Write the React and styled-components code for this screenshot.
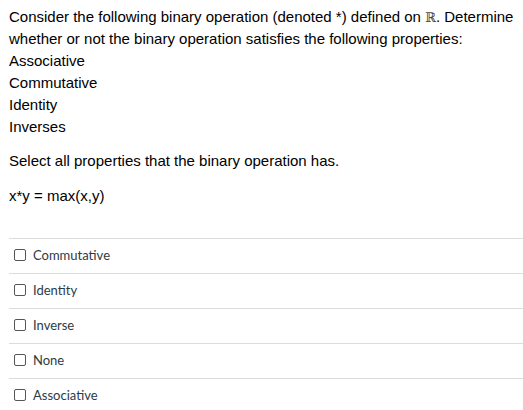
import React from 'react';
import styled, { createGlobalStyle } from 'styled-components';

const GlobalStyle = createGlobalStyle`
  body {
    margin: 0;
    background: #fff;
  }
`;

const Wrapper = styled.div`
  padding: 6px 0 0 9px;
  width: 514px;
`;

const Question = styled.div`
  font-family: "Liberation Sans", Arial, sans-serif;
  font-size: 15px;
  line-height: 22px;
  color: #000;
`;

const Para = styled.p`
  margin: 0 0 ${(p) => p.gap || 0}px;
`;

const Reals = styled.span`
  font-family: "DejaVu Serif", serif;
  font-size: 13px;
  line-height: 1;
  color: #444;
`;

const Answers = styled.div`
  margin-top: 31px;
  display: flex;
  flex-direction: column;
`;

const Option = styled.label`
  display: flex;
  align-items: center;
  gap: 7px;
  box-sizing: border-box;
  height: 35px;
  padding: 0 0 3px 5px;
  border-top: 1px solid #dcdcdc;
  font-family: Lato, "Open Sans", sans-serif;
  font-size: 13px;
  color: #2d3b45;
`;

const Box = styled.span`
  width: 10px;
  height: 10px;
  border: 1px solid #555;
  border-radius: 2px;
  background: #fff;
`;

const options = ['Commutative', 'Identity', 'Inverse', 'None', 'Associative'];

export default function App() {
  return (
    <Wrapper>
      <GlobalStyle />
      <Question>
        <Para>
          Consider the following binary operation (denoted *) defined on <Reals>ℝ</Reals>. Determine whether or not the binary operation satisfies the following properties:
        </Para>
        <Para>Associative</Para>
        <Para>Commutative</Para>
        <Para>Identity</Para>
        <Para gap={12}>Inverses</Para>
        <Para gap={13}>Select all properties that the binary operation has.</Para>
        <Para>x*y = max(x,y)</Para>
      </Question>
      <Answers>
        {options.map((o) => (
          <Option key={o}>
            <Box />
            {o}
          </Option>
        ))}
      </Answers>
    </Wrapper>
  );
}
